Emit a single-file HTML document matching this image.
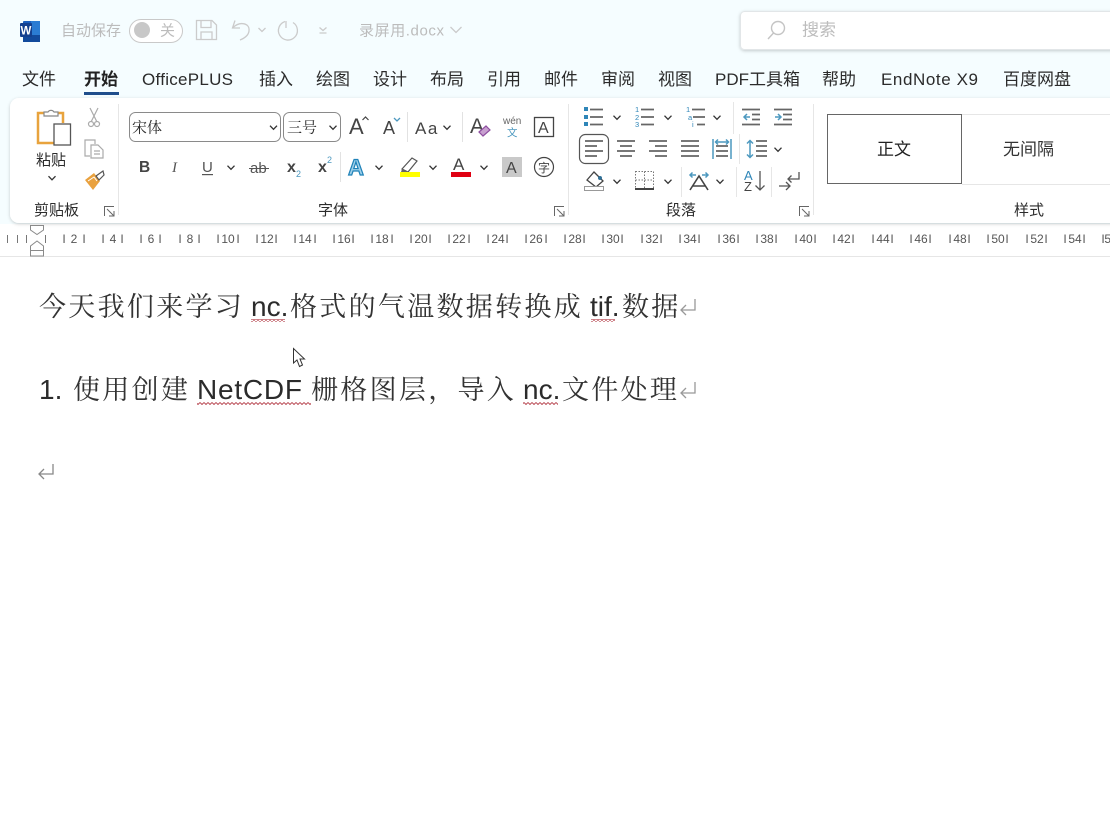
<!DOCTYPE html>
<html lang="zh"><head><meta charset="utf-8"><title>录屏用.docx</title>
<style>
html,body{margin:0;padding:0;background:#fff;width:1110px;height:832px;overflow:hidden}
svg{display:block}
text{font-family:"Liberation Sans","Noto Sans CJK SC",sans-serif;fill:#262626}
.t{font-size:17px;fill:#2b2b2b}
.g{font-size:15px;fill:#2b2b2b}
.q{font-size:15px;fill:#bcbcbc}
.r{font-size:12px;fill:#555}
.d{font-size:27px;letter-spacing:2.3px;fill:#333;font-family:"Liberation Serif","Noto Serif CJK SC",serif}
.l{font-size:28px;fill:#2b2b2b}
.i{fill:none;stroke:#555;stroke-width:1.4}
.ln{fill:none;stroke:#666;stroke-width:1.7}
.b{fill:none;stroke:#4c98bf;stroke-width:1.5}
</style></head><body>
<svg width="1110" height="832" viewBox="0 0 1110 832" xmlns="http://www.w3.org/2000/svg">
<defs>
<path id="c" d="M-3.5 -1.8L0 1.8L3.5 -1.8" fill="none" stroke="#333" stroke-width="1.3"/>
<g id="dl" fill="none" stroke="#666" stroke-width="1"><path d="M0.5 10V0.5H10"/><path d="M3 3L10 10M5 10H10V5"/></g>
<pattern id="w" width="4" height="3" patternUnits="userSpaceOnUse"><path d="M0 .5L2 2.5L4 .5" fill="none" stroke="#b5404a" stroke-width=".9"/></pattern>
<filter id="s" x="-5%" y="-10%" width="110%" height="125%"><feDropShadow dx="0" dy="1" stdDeviation="1.5" flood-color="#000" flood-opacity=".2"/></filter>
</defs>

<!-- backgrounds -->
<rect width="1110" height="832" fill="#fff"/>
<rect width="1110" height="224" fill="#f5fdff"/>
<rect x="10" y="98" width="1130" height="125" rx="9" fill="#fff" filter="url(#s)"/>
<rect x="0" y="256" width="1110" height="1" fill="#e6e6e6"/>

<!-- title bar -->
<rect x="23" y="21" width="17" height="21" rx="1" fill="#1b5ebe"/>
<rect x="31" y="21" width="9" height="21" fill="#2b7cd3"/>
<rect x="23" y="35" width="17" height="7" fill="#124a9c"/>
<rect x="20" y="23" width="12" height="14" rx="1" fill="#14408f"/>
<text x="20.500" y="34.500" style="font-size:11.500px;font-weight:700;fill:#fff">W</text>
<text x="61" y="35.500" class="q">自动保存</text>
<rect x="129.500" y="19.500" width="53" height="23" rx="11.500" fill="#fff" stroke="#c9c9c9"/>
<circle cx="142" cy="30" r="8" fill="#c8c8c8"/>
<text x="160" y="35.500" class="q">关</text>
<g fill="none" stroke="#cbcbcb" stroke-width="1.300">
<path d="M196.500 20.500H212L216.500 25V39.500H196.500Z"/><path d="M201 20.500V27.500H211V20.500M201 39.500V32H212V39.500"/>
<path d="M235 20.500L232.500 28H240M233 27.500C240 21 250 23 249 31C248.500 35 245 38 240 40"/>
<path d="M258.500 28L262 31.500L265.500 28"/>
<path d="M293 22.500A9.500 9.500 0 1 1 285 21.500M286 21V28"/>
<path d="M319.500 27.500L323 30.500L326.500 27.500M319.500 33H326.500"/>
<path d="M450.500 27L456 32.500L461.500 27"/>
</g>
<text x="359" y="35.500" class="q" textLength="85">录屏用.docx</text>

<!-- search -->
<rect x="740.500" y="11.500" width="400" height="38" rx="4" fill="#fff" stroke="#e2e6e8" filter="url(#s)"/>
<g fill="none" stroke="#c4c4c4" stroke-width="1.400"><circle cx="778" cy="28" r="6.500"/><path d="M773.500 33L768 39"/></g>
<text x="802" y="35.500" style="font-size:17px;fill:#bcbcbc">搜索</text>

<!-- tabs -->
<text x="22" y="85" class="t">文件</text>
<text x="84" y="85" class="t" style="font-weight:700;fill:#222">开始</text>
<rect x="84" y="92" width="35" height="3" fill="#1f4e8c"/>
<text x="142" y="85" class="t" textLength="91">OfficePLUS</text>
<text x="259" y="85" class="t">插入</text>
<text x="316" y="85" class="t">绘图</text>
<text x="373" y="85" class="t">设计</text>
<text x="430" y="85" class="t">布局</text>
<text x="487" y="85" class="t">引用</text>
<text x="544" y="85" class="t">邮件</text>
<text x="601" y="85" class="t">审阅</text>
<text x="658" y="85" class="t">视图</text>
<text x="715" y="85" class="t">PDF工具箱</text>
<text x="822" y="85" class="t">帮助</text>
<text x="881" y="85" class="t" textLength="97">EndNote X9</text>
<text x="1003" y="85" class="t">百度网盘</text>

<!-- clipboard group -->
<path d="M44 113H38V143H56" fill="none" stroke="#e8a33d" stroke-width="2.500"/>
<path d="M58 113H63V123" fill="none" stroke="#e8a33d" stroke-width="2.500"/>
<path d="M44 116V112H48A3.500 3.500 0 0 1 54 112H58V116Z" fill="#fff" stroke="#888" stroke-width="1.200"/>
<rect x="54" y="124" width="16.500" height="21" fill="#fff" stroke="#555" stroke-width="1.300"/>
<text x="36" y="165" class="g">粘贴</text>
<use href="#c" x="52" y="178"/>
<text x="34" y="215" class="g">剪贴板</text>
<use href="#dl" x="104" y="206"/>
<g fill="none" stroke="#aaa" stroke-width="1.200">
<path d="M90 108L97 122M98 108L91 122"/><circle cx="91" cy="124" r="2.500"/><circle cx="97" cy="124" r="2.500"/>
<path d="M90 156H85V140H95V144M91 145H98L103 150V158H91Z"/><path d="M94 151H100M94 154H100"/>
</g>
<path d="M85 180L94 173L100 181L93 190Z" fill="#e9a13e"/>
<path d="M88 181L94 177L97 181" fill="none" stroke="#fff"/>
<path d="M96 176L103 171L104 175L99 180Z" fill="#fff" stroke="#555" stroke-width="1.200"/>
<rect x="118" y="104" width="1" height="111" fill="#e6e6e6"/>

<!-- font group -->
<rect x="129.500" y="112.500" width="151" height="29" rx="6" fill="#fff" stroke="#8a8a8a"/>
<text x="132" y="132.500" class="g" style="font-family:'Noto Serif CJK SC',serif;font-size:15px">宋体</text>
<use href="#c" x="273.500" y="127.500"/>
<rect x="283.500" y="112.500" width="57" height="29" rx="6" fill="#fff" stroke="#8a8a8a"/>
<text x="287" y="132.500" class="g" style="font-family:'Noto Serif CJK SC',serif;font-size:15px">三号</text>
<use href="#c" x="333" y="127.500"/>
<text x="349" y="134" style="font-size:22px;fill:#444">A</text>
<path d="M362.500 120L365.500 117L368.500 120" fill="none" stroke="#444" stroke-width="1.200"/>
<text x="383" y="134" style="font-size:18px;fill:#444">A</text>
<path d="M394 118L397 121L400 118" fill="none" stroke="#4c98bf" stroke-width="1.300"/>
<rect x="407" y="112" width="1" height="30" fill="#e2e2e2"/>
<text x="415" y="134" style="font-size:17px;letter-spacing:1.500px;fill:#444">Aa</text>
<use href="#c" x="447" y="127.500"/>
<rect x="462" y="112" width="1" height="30" fill="#e2e2e2"/>
<text x="470" y="133" style="font-size:21px;fill:#444">A</text>
<path d="M479 132L486 126L490 130L483 136Z" fill="#c8a0d0" stroke="#8e4ea0" stroke-width="1.200"/>
<text x="503" y="124" style="font-size:10px;fill:#666">wén</text>
<text x="507" y="136" style="font-size:10.500px;fill:#4c98bf">文</text>
<rect x="534.500" y="117.500" width="19" height="19" fill="#fff" stroke="#444" stroke-width="1.300"/>
<text x="538" y="133" style="font-size:16px;fill:#444">A</text>

<text x="139" y="172" style="font-size:15.500px;font-weight:700;fill:#444">B</text>
<text x="172" y="172" style="font-size:15px;font-style:italic;font-family:'Liberation Serif',serif;fill:#555">I</text>
<text x="202" y="172" style="font-size:15px;fill:#555">U</text>
<rect x="202" y="174" width="11" height="1.200" fill="#555"/>
<use href="#c" x="231" y="167.500"/>
<text x="250" y="173" style="font-size:15px;fill:#555">ab</text>
<rect x="249" y="168" width="20" height="1" fill="#555"/>
<text x="287" y="172" style="font-size:16px;font-weight:700;fill:#444">x</text>
<text x="296" y="177" style="font-size:9px;fill:#4c98bf">2</text>
<text x="318" y="172" style="font-size:16px;font-weight:700;fill:#444">x</text>
<text x="327" y="163" style="font-size:9px;fill:#4c98bf">2</text>
<rect x="340" y="152" width="1" height="30" fill="#e2e2e2"/>
<text x="348" y="175" style="font-size:22px;font-weight:700;fill:#9fd0ea;stroke:#1f82b8;stroke-width:1.200">A</text>
<use href="#c" x="379" y="167.500"/>
<path d="M402 169L412 158L417 161L408 172Z" fill="#fff" stroke="#555" stroke-width="1.200"/>
<path d="M402 169L408 172L401 172Z" fill="#666"/>
<rect x="400" y="172" width="20" height="5" fill="#ffff00"/>
<use href="#c" x="433" y="167.500"/>
<text x="453" y="170" style="font-size:17px;fill:#444">A</text>
<rect x="451" y="172" width="20" height="5" fill="#e00012"/>
<use href="#c" x="484" y="167.500"/>
<rect x="502" y="157" width="20" height="20" fill="#c9c9c9"/>
<text x="506" y="173" style="font-size:16px;fill:#444">A</text>
<circle cx="544" cy="167" r="9.500" fill="none" stroke="#444" stroke-width="1.200"/>
<text x="538" y="172" style="font-size:12px;fill:#444">字</text>
<text x="318" y="215" class="g">字体</text>
<use href="#dl" x="554" y="206"/>
<rect x="568" y="104" width="1" height="111" fill="#e6e6e6"/>

<!-- paragraph group -->
<g class="ln">
<path d="M590 109.500H603M590 117H603M590 124.500H603" class="ln"/>
<path d="M641 109.500H654M641 117H654M641 124.500H654" class="ln"/>
<path d="M692 109.500H705M693 117H705M697 124.500H705" class="ln"/>
<path d="M742 109.500H760M752 114.500H760M752 119.500H760M742 124.500H760" class="ln"/>
<path d="M774 109.500H792M783 114.500H792M783 119.500H792M774 124.500H792" class="ln"/>
</g>
<g fill="#2f86b8"><rect x="584" y="107" width="4" height="4"/><rect x="584" y="115" width="4" height="4"/><rect x="584" y="122" width="4" height="4"/></g>
<g style="font-size:7.500px"><text x="635" y="112" style="fill:#2f86b8">1</text><text x="635" y="120" style="fill:#2f86b8">2</text><text x="635" y="127" style="fill:#2f86b8">3</text><text x="686" y="112" style="fill:#2f86b8">1</text><text x="688" y="120" style="fill:#2f86b8">a</text><text x="692" y="127" style="fill:#2f86b8">i</text></g>
<path d="M750 117H744M747 114L744 117L747 120" class="b"/>
<path d="M775 117H781M778 114L781 117L778 120" class="b"/>
<use href="#c" x="617" y="117.500"/><use href="#c" x="668" y="117.500"/><use href="#c" x="717" y="117.500"/>
<rect x="733" y="102" width="1" height="32" fill="#e6e6e6"/>

<rect x="579.500" y="134.500" width="29" height="29" rx="6" fill="#fff" stroke="#555" stroke-width="1.200"/>
<path d="M585 141H603M585 146H597M585 151H603M585 156H597" class="ln"/>
<path d="M617 141H635M620 146H632M617 151H635M620 156H632" class="ln"/>
<path d="M649 141H667M655 146H667M649 151H667M655 156H667" class="ln"/>
<path d="M681 141H699M681 146H699M681 151H699M681 156H699" class="ln"/>
<path d="M716 146H728M716 151H728M716 156H728" class="ln"/>
<path d="M713 139V159M731 139V159" class="b"/>
<path d="M716 142H728M718 139.500L715.500 142L718 144.500M726 139.500L728.500 142L726 144.500" class="b"/>
<rect x="739" y="134" width="1" height="30" fill="#e6e6e6"/>
<path d="M750 141V157M747 143.500L750 140.500L753 143.500M747 154.500L750 157.500L753 154.500" class="b"/>
<path d="M756 141H767M756 146H767M756 151H767M756 156H767" class="ln"/>
<use href="#c" x="778" y="149.500"/>

<path d="M587 180L594 172L603 181L596 187Z" fill="#fff" stroke="#444" stroke-width="1.300"/>
<circle cx="600" cy="178" r="2" fill="#2f6f96"/>
<rect x="584.500" y="186.500" width="19" height="4" fill="#fff" stroke="#999"/>
<use href="#c" x="617" y="181.500"/>
<path d="M635.500 171.500H653.500V188.500H635.500ZM644.500 171.500V188.500M635.500 180H653.500" fill="none" stroke="#777" stroke-dasharray="1.500 1.500"/>
<rect x="635" y="188" width="19" height="2" fill="#444"/>
<use href="#c" x="668" y="181.500"/>
<rect x="681" y="167" width="1" height="30" fill="#e6e6e6"/>
<path d="M690 190L699 176L708 190M693 186H705" fill="none" stroke="#444" stroke-width="1.600"/>
<path d="M690 175H696M692.500 172.500L690 175L692.500 177.500M702 175H708M705.500 172.500L708 175L705.500 177.500" class="b"/>
<use href="#c" x="720" y="181.500"/>
<rect x="736" y="167" width="1" height="30" fill="#e6e6e6"/>
<text x="744" y="180" style="font-size:13px;fill:#2f86b8">A</text>
<text x="744" y="191" style="font-size:13px;fill:#444">Z</text>
<path d="M760 171V190M755.500 185.500L760 190L764.500 185.500" fill="none" stroke="#555" stroke-width="1.300"/>
<rect x="771" y="167" width="1" height="30" fill="#e6e6e6"/>
<path d="M779 186H790M786 182L790 186L786 190" fill="none" stroke="#555" stroke-width="1.300"/>
<path d="M799 172V179H788M791.500 175.500L788 179L791.500 182.500" fill="none" stroke="#555" stroke-width="1.300"/>
<text x="666" y="215" class="g">段落</text>
<use href="#dl" x="799" y="206"/>
<rect x="813" y="104" width="1" height="111" fill="#e6e6e6"/>

<!-- styles -->
<path d="M962 114.500H1110M962 184.500H1110" stroke="#e6e6e6" fill="none"/>
<rect x="827.500" y="114.500" width="134" height="69" fill="#fff" stroke="#666"/>
<text x="877" y="155" style="font-size:17px;fill:#222">正文</text>
<text x="1003" y="155" style="font-size:17px;fill:#333">无间隔</text>
<text x="1014" y="215" class="g">样式</text>

<!-- ruler -->
<g fill="#777">
<rect x="7" y="235" width="1" height="8"/><rect x="17" y="235" width="1" height="8"/><rect x="26" y="235" width="1" height="8"/><rect x="45" y="235" width="1" height="8"/>
</g>
<g class="r" text-anchor="middle">
<text x="64" y="243" class="r">I</text><text x="74" y="243" class="r">2</text><text x="84" y="243" class="r">I</text>
<text x="103" y="243" class="r">I</text><text x="113" y="243" class="r">4</text><text x="122" y="243" class="r">I</text>
<text x="141" y="243" class="r">I</text><text x="151" y="243" class="r">6</text><text x="160" y="243" class="r">I</text>
<text x="180" y="243" class="r">I</text><text x="190" y="243" class="r">8</text><text x="199" y="243" class="r">I</text>
<text x="218" y="243" class="r">I</text><text x="228" y="243" class="r">10</text><text x="238" y="243" class="r">I</text>
<text x="257" y="243" class="r">I</text><text x="267" y="243" class="r">12</text><text x="276" y="243" class="r">I</text>
<text x="295" y="243" class="r">I</text><text x="305" y="243" class="r">14</text><text x="315" y="243" class="r">I</text>
<text x="334" y="243" class="r">I</text><text x="344" y="243" class="r">16</text><text x="353" y="243" class="r">I</text>
<text x="372" y="243" class="r">I</text><text x="382" y="243" class="r">18</text><text x="392" y="243" class="r">I</text>
<text x="411" y="243" class="r">I</text><text x="421" y="243" class="r">20</text><text x="430" y="243" class="r">I</text>
<text x="449" y="243" class="r">I</text><text x="459" y="243" class="r">22</text><text x="469" y="243" class="r">I</text>
<text x="488" y="243" class="r">I</text><text x="498" y="243" class="r">24</text><text x="507" y="243" class="r">I</text>
<text x="526" y="243" class="r">I</text><text x="536" y="243" class="r">26</text><text x="546" y="243" class="r">I</text>
<text x="565" y="243" class="r">I</text><text x="575" y="243" class="r">28</text><text x="584" y="243" class="r">I</text>
<text x="603" y="243" class="r">I</text><text x="613" y="243" class="r">30</text><text x="622" y="243" class="r">I</text>
<text x="642" y="243" class="r">I</text><text x="652" y="243" class="r">32</text><text x="661" y="243" class="r">I</text>
<text x="680" y="243" class="r">I</text><text x="690" y="243" class="r">34</text><text x="699" y="243" class="r">I</text>
<text x="719" y="243" class="r">I</text><text x="729" y="243" class="r">36</text><text x="738" y="243" class="r">I</text>
<text x="757" y="243" class="r">I</text><text x="767" y="243" class="r">38</text><text x="776" y="243" class="r">I</text>
<text x="796" y="243" class="r">I</text><text x="806" y="243" class="r">40</text><text x="815" y="243" class="r">I</text>
<text x="834" y="243" class="r">I</text><text x="844" y="243" class="r">42</text><text x="853" y="243" class="r">I</text>
<text x="873" y="243" class="r">I</text><text x="883" y="243" class="r">44</text><text x="892" y="243" class="r">I</text>
<text x="911" y="243" class="r">I</text><text x="921" y="243" class="r">46</text><text x="930" y="243" class="r">I</text>
<text x="950" y="243" class="r">I</text><text x="960" y="243" class="r">48</text><text x="969" y="243" class="r">I</text>
<text x="988" y="243" class="r">I</text><text x="998" y="243" class="r">50</text><text x="1007" y="243" class="r">I</text>
<text x="1027" y="243" class="r">I</text><text x="1037" y="243" class="r">52</text><text x="1046" y="243" class="r">I</text>
<text x="1065" y="243" class="r">I</text><text x="1075" y="243" class="r">54</text><text x="1084" y="243" class="r">I</text>
<text x="1103" y="243" class="r">I</text><text x="1111" y="243" class="r">56</text>
</g>
<path d="M30.500 225.500H43.500V230L37 234.500L30.500 230Z" fill="#fff" stroke="#8a8a8a"/>
<path d="M30.500 250.500V246L37 241L43.500 246V250.500ZM30.500 250.500V256H43.500V250.500" fill="#fff" stroke="#8a8a8a"/>

<!-- document -->
<text x="39" y="316" class="d">今天我们来学习</text>
<text x="251" y="316" class="l">nc.</text>
<text x="290" y="316" class="d">格式的气温数据转换成</text>
<text x="590" y="316" class="l">tif.</text>
<text x="622" y="316" class="d">数据</text>
<rect x="251" y="319" width="34" height="3" fill="url(#w)"/>
<rect x="591" y="319" width="24" height="3" fill="url(#w)"/>

<text x="39" y="399" class="l">1.</text>
<text x="73" y="399" class="d">使用创建</text>
<text x="197" y="399" class="l" textLength="105">NetCDF</text>
<text x="311" y="399" class="d">栅格图层，导入</text>
<text x="523" y="399" class="l">nc.</text>
<text x="562" y="399" class="d">文件处理</text>
<rect x="197" y="402" width="114" height="3" fill="url(#w)"/>
<rect x="523" y="402" width="35" height="3" fill="url(#w)"/>

<g fill="none" stroke="#999" stroke-width="1.300">
<path d="M695 299V310H681M686 305L681 310L686 315"/>
<path d="M695 382V393H681M686 388L681 393L686 398"/>
<path d="M53 464V474H39M44 469L39 474L44 479" stroke="#888"/>
</g>

<!-- mouse cursor -->
<path d="M293.500 348.500V363L297 360L299.500 366.500L302.500 365L300 359H304.500Z" fill="#fff" stroke="#333" stroke-width="1"/>
</svg>
</body></html>
